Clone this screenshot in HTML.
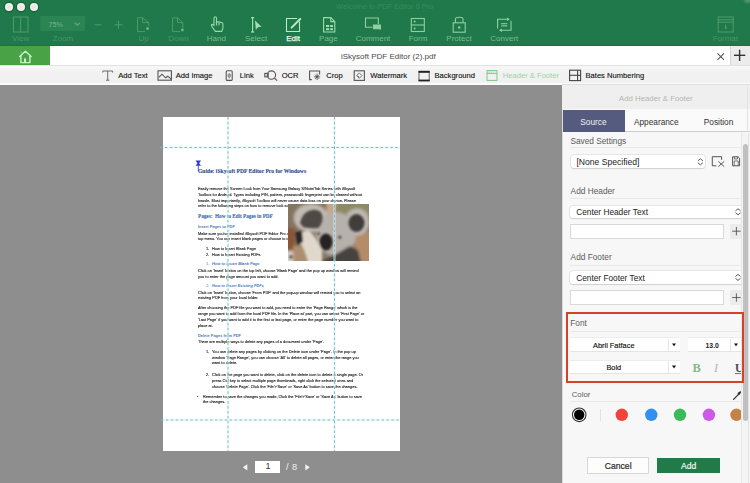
<!DOCTYPE html>
<html><head><meta charset="utf-8">
<style>
*{margin:0;padding:0;box-sizing:border-box}
html,body{width:750px;height:483px;overflow:hidden;background:#8e8e8e;font-family:"Liberation Sans",sans-serif}
.a{position:absolute}
.t{position:absolute;white-space:nowrap;line-height:1}
#top{left:0;top:0;width:750px;height:45px;background:#20794a}
#top .lbl{font-size:8px;color:#78b991;text-align:center;width:60px;top:35.2px}
.tl{width:8px;height:8px;border-radius:50%;background:radial-gradient(#e8dede 0,#eef4ee 60%);top:2.8px;box-shadow:0 0 0 1.4px #1b6439}
#tabs{left:0;top:45px;width:750px;height:21px;background:#fff;border-top:1px solid #1e6f41}
#home{left:0;top:46px;width:50px;height:19.3px;background:#4aa247}
#plus{left:730px;top:46px;width:20px;height:19px;background:#ececec;border-left:1px solid #d6d6d6}
#tb{left:0;top:65.3px;width:750px;height:19.7px;background:linear-gradient(#f8f8f8,#f1f1f1 40%,#f1f1f1);border-top:1px solid #e2e2e2;border-bottom:2px solid #fbfbfb}
#tbt .t{font-size:7.6px;color:#111;-webkit-text-stroke:0.12px #111}
#doc{left:0;top:85px;width:562px;height:398px;background:#8e8e8e}
#page{left:163px;top:117px;width:237px;height:334px;background:#fff}
#panel{left:562px;top:85px;width:188px;height:398px;background:#f7f7f7;border-left:1px solid #dcdcdc}
.lb{font-size:8.3px;color:#5a5a5a}
.sep{left:570px;width:170px;height:1px;background:#e8e8e8}
.dd{background:#fff;border-radius:3px;box-shadow:0 0 0 0.6px #d8d8d8,0 0.6px 1px rgba(0,0,0,.18)}
.inp{background:#fff;border:1px solid #d9d9d9}
.dd2{background:#fff;border-top:1px solid #ececec;border-bottom:1px solid #e4e4e4}
.bt{font-size:4.2px;color:#1a1a1a;transform:scaleX(0.93);transform-origin:0 0;-webkit-text-stroke:0.12px #1a1a1a}
</style></head><body>
<div id="top" class="a">
<div class="t" style="left:336px;top:2.6px;font-size:7.45px;color:#2f9058">Welcome to PDF Editor 6 Pro</div>
<svg class="a" style="left:0;top:0" width="750" height="45" viewBox="0 0 750 45">
<g fill="none" stroke="#4f9c6c" stroke-width="1">
<rect x="13.5" y="17" width="14.5" height="15"/><line x1="20.7" y1="17" x2="20.7" y2="32"/>
</g>
<rect x="40.2" y="15.9" width="45" height="15.2" fill="#2b8453"/>
<text x="48.5" y="27" font-family="Liberation Sans" font-size="7.2" font-weight="bold" fill="#5ea97e">75%</text>
<path d="M74.6 22.8 L77.3 25.3 L80 22.8" fill="none" stroke="#5ea97e" stroke-width="1.2"/>
<g stroke="#4f9c6c" stroke-width="1" fill="none">
<line x1="94.5" y1="24.8" x2="101.5" y2="24.8"/>
<line x1="114.5" y1="24.8" x2="122.5" y2="24.8"/><line x1="118.5" y1="20.8" x2="118.5" y2="28.8"/>
<path d="M145 31.6 H137.6 V17.8 H142.5 L148.8 22.6 V26.5"/><path d="M142.5 17.8 V22.6 H148.8"/>
<path d="M180 31.6 H172.6 V17.8 H177.5 L182.8 22.6 V28"/><path d="M177.5 17.8 V22.6 H182.8"/>
</g>
<circle cx="147.5" cy="28.6" r="1.4" fill="#6cba88"/>
<circle cx="182.4" cy="30" r="1.4" fill="#6cba88"/>
<g stroke="#95d9a8" stroke-width="1.1" fill="none" stroke-linejoin="round" stroke-linecap="round">
<path d="M215.3 31.4 L211.6 26.2 Q210.8 24.6 212.3 24.3 L214 25.6 V18 Q214.1 16.8 215.2 16.8 Q216.4 16.8 216.5 18 V22.2 Q217.8 21.4 219 22.1 Q220.4 21.6 221.3 22.6 Q222.8 22.3 222.9 24 V28.4 L221.8 31.4 Z"/>
<line x1="216.5" y1="22.2" x2="216.5" y2="25"/><line x1="219" y1="22.1" x2="219" y2="25"/>
</g>
<g stroke="#9fe0b0" stroke-width="1.2" fill="none">
<line x1="252.6" y1="17.6" x2="252.6" y2="32"/><line x1="251" y1="17.6" x2="254.2" y2="17.6"/><line x1="251" y1="32" x2="254.2" y2="32"/>
</g>
<path d="M255 20.6 L261.6 26.8 L258.4 27 L255.8 29.8 Z" fill="#9fe0b0"/>
<g stroke="#b8eac5" stroke-width="1.1" fill="none">
<path d="M297.2 18.5 H286.5 V31.5 H299.5 V21.5"/>
</g>
<path d="M291.6 27.6 L300.2 19" stroke="#b8eac5" stroke-width="2" stroke-linecap="round"/>
<g stroke="#9fdcb0" stroke-width="1.1" fill="none" stroke-linejoin="round">
<path d="M330.8 17.6 H323.6 V32 H334.8 V21.6 Z M330.8 17.6 L334.8 21.6"/>
<path d="M330.8 17.6 V21.6 H334.8"/>
</g>
<g fill="#9fdcb0"><rect x="326" y="25" width="3.2" height="2"/><rect x="330.2" y="25" width="2.8" height="2"/><rect x="326" y="28.2" width="3.2" height="2"/><rect x="330.2" y="28.2" width="2.8" height="2"/></g>
<g stroke="#8fd0a2" stroke-width="1.1" fill="none">
<path d="M372.5 27.3 H365.5 V18 H378.3 V24"/>
<rect x="411.3" y="18.5" width="13" height="13"/><line x1="411.3" y1="25" x2="424.3" y2="25"/>
<path d="M455.4 22.8 V19.2 Q455.4 17.3 459.2 17.3 Q463 17.3 463 19.2 V22.8"/>
<rect x="453.2" y="22.8" width="12" height="9.4"/>
</g>
<path d="M373 24.4 H381 V30 L379.8 29.2 H373 Z" fill="#8fd0a2"/>
<circle cx="414.6" cy="21.6" r="1" fill="#8fd0a2"/><circle cx="414.6" cy="28.4" r="1" fill="#8fd0a2"/>
<circle cx="459.2" cy="27.5" r="1.2" fill="#8fd0a2"/>
<g stroke="#8fd0a2" stroke-width="1.1" fill="none">
<path d="M507.5 19.2 H497.6 V28.4"/><path d="M500.8 30.2 H511 V20.8"/>
<line x1="501.2" y1="23.7" x2="507.3" y2="23.7"/><line x1="501.2" y1="25.9" x2="507.3" y2="25.9"/>
</g>
<path d="M507 17.5 L509.8 19.2 L507 21 Z M502 28.5 L499 30.3 L502 32 Z" fill="#8fd0a2"/>
<g stroke="#4f9c6c" stroke-width="1" fill="none">
<rect x="718.2" y="17" width="15" height="15"/><line x1="718.2" y1="19.8" x2="733.2" y2="19.8"/><line x1="718.2" y1="22.2" x2="733.2" y2="22.2"/>
<line x1="725.7" y1="24.5" x2="725.7" y2="29"/>
</g>
<path d="M724.3 27.5 L725.7 29.6 L727.1 27.5 Z" fill="#4f9c6c"/>
</svg>
  <div class="a tl" style="left:4.7px"></div>
  <div class="a tl" style="left:17px"></div>
  <div class="a tl" style="left:29.6px"></div>
  <div class="t lbl" style="left:-9.3px;color:#4c9468">View</div>
  <div class="t lbl" style="left:33px;color:#4c9468">Zoom</div>
  <div class="t lbl" style="left:113.5px;color:#4c9468">Up</div>
  <div class="t lbl" style="left:148.4px;color:#4c9468">Down</div>
  <div class="t lbl" style="left:186.3px">Hand</div>
  <div class="t lbl" style="left:226px">Select</div>
  <div class="t lbl" style="left:263.2px;color:#eef8f0;-webkit-text-stroke:0.25px #eef8f0">Edit</div>
  <div class="t lbl" style="left:298.4px">Page</div>
  <div class="t lbl" style="left:343px">Comment</div>
  <div class="t lbl" style="left:388px">Form</div>
  <div class="t lbl" style="left:429px">Protect</div>
  <div class="t lbl" style="left:474.3px">Convert</div>
  <div class="t lbl" style="left:695.3px;color:#4c9468">Format</div>
</div>
<div id="tabs" class="a"></div>
<div id="home" class="a"></div><div id="plus" class="a"></div>
<svg class="a" style="left:0;top:44px" width="750" height="24" viewBox="0 44 750 24">
<g fill="none" stroke="#c6f2c6" stroke-width="1.4" stroke-linejoin="round" stroke-linecap="round">
<path d="M19.6 56.6 L25.4 51.2 L31.2 56.6"/><path d="M20.9 55.6 V62.6 H29.9 V55.6"/>
</g>
<rect x="24" y="58.4" width="2" height="4" fill="#c6f2c6"/>
<circle cx="21.2" cy="52.2" r="0.6" fill="#9ad89a"/>
<g stroke="#555" stroke-width="1.1"><line x1="717.5" y1="53.3" x2="724" y2="59.8"/><line x1="724" y1="53.3" x2="717.5" y2="59.8"/></g>
<g stroke="#333" stroke-width="1.4"><line x1="734" y1="55.3" x2="745.3" y2="55.3"/><line x1="739.6" y1="49.7" x2="739.6" y2="61"/></g>
</svg>
<div class="t" style="left:341px;top:52.6px;font-size:8px;color:#4a4a4a">iSkysoft PDF Editor (2).pdf</div>
<div id="tb" class="a"></div>
<svg class="a" style="left:0;top:65px" width="750" height="20" viewBox="0 65 750 20">
<g fill="none" stroke="#6a6a6a" stroke-width="1">
<path d="M102.8 72.6 V71 H112.6 V72.6 M107.7 71 V80 M106 80.2 H109.4"/>
</g>
<g fill="none" stroke="#555" stroke-width="1.1">
<rect x="158" y="70.8" width="13.4" height="9.4"/>
<path d="M158.8 77.4 L162 74.2 L165.6 77.8 L167.8 76.2 L171.4 79.4"/>
<rect x="226.2" y="70.8" width="6" height="9.6" rx="1"/>
<path d="M229.2 73 V78.4 M228.2 74 V77.2 M230.2 74 V77.2" stroke-width="0.7"/>
<rect x="264.8" y="73.4" width="3.4" height="3.4"/>
<circle cx="271.4" cy="75.1" r="4.2"/><line x1="274.4" y1="78.1" x2="277.2" y2="80.6"/>
<path d="M319.6 74.2 V71 H309.6 V79.6 H311.8"/>
<rect x="354.2" y="70.8" width="10.2" height="9.6"/>
<path d="M356.6 75.6 L359.3 72.9 L362 75.6 L359.3 78.3 Z M357.6 75.6 L359.3 77.3" stroke-width="0.8"/>
<rect x="419" y="71.6" width="10.2" height="9" stroke-width="0.9"/>
</g>
<path d="M314 76.8 H320.2 M317.1 73.6 V80 M315 74.6 L319.2 78.9 M319.2 74.6 L315 78.9" stroke="#444" stroke-width="0.8"/>
<rect x="418.5" y="70.8" width="11.2" height="2" fill="#222"/><rect x="418.5" y="79.6" width="11.2" height="1.8" fill="#222"/>
<g fill="none" stroke="#7cc785" stroke-width="1"><rect x="487" y="70.6" width="10" height="9.8"/><line x1="487" y1="73.4" x2="497" y2="73.4"/></g>
<path d="M489 71.6 v1 M491.5 71.6 v1 M494 71.6 v1" stroke="#7cc785" stroke-width="0.8"/>
<g fill="none" stroke="#444" stroke-width="1.1"><rect x="569.6" y="70.2" width="11" height="10.4"/><line x1="569.6" y1="75.3" x2="580.6" y2="75.3"/><line x1="577.6" y1="70.2" x2="577.6" y2="80.6"/></g>
</svg>
<div id="tbt" class="a" style="left:0;top:65px;width:750px;height:20px">
  <div class="t" style="left:118.3px;top:6.8px">Add Text</div>
  <div class="t" style="left:175.8px;top:6.8px">Add Image</div>
  <div class="t" style="left:239.8px;top:6.8px">Link</div>
  <div class="t" style="left:281.7px;top:6.8px">OCR</div>
  <div class="t" style="left:326.2px;top:6.8px">Crop</div>
  <div class="t" style="left:370.3px;top:6.8px">Watermark</div>
  <div class="t" style="left:434.5px;top:6.8px">Background</div>
  <div class="t" style="left:502.8px;top:6.8px;color:#9ad4a2;-webkit-text-stroke:0 transparent">Header &amp; Footer</div>
  <div class="t" style="left:585.5px;top:6.8px">Bates Numbering</div>
</div>
<div id="doc" class="a"></div>
<div id="page" class="a"></div>
<div id="pg" class="a" style="left:0;top:0;width:750px;height:483px">
<div class="t bt" style="left:198px;top:186.51px">Easily remove the Screen Lock from Your Samsung Galaxy S/Note/Tab Series with iSkysoft</div>
<div class="t bt" style="left:198px;top:192.81px">Toolbox for Android. Types including PIN, pattern, password&amp; fingerprint can be cleared without</div>
<div class="t bt" style="left:198px;top:198.61px">hassle. Most importantly, iSkysoft Toolbox will never cause data loss on your device. Please</div>
<div class="t bt" style="left:198px;top:204.21px">refer to the following steps on how to remove lock screen.</div>
<div class="t bt" style="left:198px;top:231.61px">Make sure you've installed iSkysoft PDF Editor Pro on your computer. Go to 'Page' tab on the</div>
<div class="t bt" style="left:198px;top:237.41px">top menu. You can insert blank pages or choose to insert existing PDFs.</div>
<div class="t bt" style="left:212.4px;top:247.01px">How to Insert Blank Page</div>
<div class="t bt" style="left:212.4px;top:253.11px">How to Insert Existing PDFs</div>
<div class="t bt" style="left:198px;top:268.91px">Click on 'Insert' button on the top left, choose 'Blank Page' and the pop up window will remind</div>
<div class="t bt" style="left:198px;top:275.11px">you to enter the page amount you want to add.</div>
<div class="t bt" style="left:198px;top:290.61px">Click on 'Insert' button, choose 'From PDF' and the pop-up window will remind you to select an</div>
<div class="t bt" style="left:198px;top:296.21px">existing PDF from your local folder.</div>
<div class="t bt" style="left:198px;top:306.11px">After choosing the PDF file you want to add, you need to enter the 'Page Range' which is the</div>
<div class="t bt" style="left:198px;top:312.11px">range you want to add from the local PDF file. In the 'Place at' part, you can select 'First Page' or</div>
<div class="t bt" style="left:198px;top:317.91px">'Last Page' if you want to add it to the first or last page, or enter the page number you want to</div>
<div class="t bt" style="left:198px;top:324.01px">place at.</div>
<div class="t bt" style="left:198px;top:339.51px">There are multiple ways to delete any pages of a document under 'Page'.</div>
<div class="t bt" style="left:212px;top:349.71px">You can delete any pages by clicking on the Delete icon under 'Page'. In the pop up</div>
<div class="t bt" style="left:212px;top:355.91px">window 'Page Range', you can choose 'All' to delete all pages, or enter the range you</div>
<div class="t bt" style="left:212px;top:361.21px">want to delete.</div>
<div class="t bt" style="left:212px;top:373.11px">Click on the page you want to delete, click on the delete icon to delete a single page. Or</div>
<div class="t bt" style="left:212px;top:379.31px">press Ctrl key to select multiple page thumbnails, right click the selected ones and</div>
<div class="t bt" style="left:212px;top:385.31px">choose 'Delete Page'. Click the 'File'&gt;'Save' or 'Save As' button to save the changes.</div>
<div class="t bt" style="left:203.2px;top:395.11px">Remember to save the changes you made, Click the 'File'&gt;'Save' or 'Save As' button to save</div>
<div class="t bt" style="left:203.2px;top:400.41px">the changes.</div>
<div class="t bt" style="left:205.7px;top:247.01px">1.</div>
<div class="t bt" style="left:205.7px;top:253.11px">2.</div>
<div class="t bt" style="left:205.9px;top:349.71px">1.</div>
<div class="t bt" style="left:205.9px;top:373.11px">2.</div>
<div class="t bt" style="left:196.6px;top:395.11px">&#8226;</div>
<div class="t" style="left:198px;top:169.28px;font-family:'Liberation Serif';font-weight:bold;font-size:5.6px;color:#2d4d85;-webkit-text-stroke:0.1px #2d4d85">Guide: iSkysoft PDF Editor Pro for Windows</div>
<div class="t" style="left:198px;top:213.87px;font-family:'Liberation Serif';font-weight:bold;font-size:5.2px;color:#3f6eb4;-webkit-text-stroke:0.1px #3f6eb4">Pages:&nbsp; How to Edit Pages in PDF</div>
<div class="t" style="left:198px;top:225.3px;font-size:3.9px;font-weight:bold;color:#4a78bc">Insert Pages to PDF</div>
<div class="t" style="left:198px;top:333.6px;font-size:3.92px;font-weight:bold;color:#4a78bc">Delete Pages from PDF</div>
<div class="t" style="left:212px;top:262.2px;font-size:3.96px;font-weight:bold;font-style:italic;color:#4a78bc">How to Insert Blank Page</div>
<div class="t" style="left:212px;top:284.2px;font-size:3.9px;font-weight:bold;font-style:italic;color:#4a78bc">How to Insert Existing PDFs</div>
<div class="t" style="left:205.9px;top:262.10px;font-size:4.2px;color:#4f81bd">1.</div>
<div class="t" style="left:205.9px;top:284.10px;font-size:4.2px;color:#4f81bd">2.</div>
</div>
<svg class="a" style="left:288.3px;top:203.9px" width="81" height="57.4" viewBox="0 0 81 57.4">
<defs><filter id="bl" x="-30%" y="-30%" width="160%" height="160%"><feGaussianBlur stdDeviation="1.5"/></filter>
<filter id="bl2" x="-30%" y="-30%" width="160%" height="160%"><feGaussianBlur stdDeviation="0.8"/></filter>
<clipPath id="kc"><rect width="81" height="57.4"/></clipPath></defs>
<g clip-path="url(#kc)">
<rect width="81" height="57.4" fill="#8c7c66"/>
<g filter="url(#bl)">
<rect x="-4" y="-4" width="44" height="30" fill="#857560"/>
<rect x="46" y="-4" width="40" height="14" fill="#8c8a66"/>
<path d="M39 -4 L49 -4 L46 10 L38 10 Z" fill="#c6a890"/>
<rect x="-4" y="24" width="11" height="26" fill="#8a5436"/>
<rect x="-4" y="47" width="10" height="14" fill="#d8cfc6"/>
<rect x="5" y="42" width="14" height="18" fill="#ad8e70"/>
<path d="M66 28 L86 28 L86 62 L68 62 Z" fill="#b58c68"/>
<ellipse cx="23" cy="14" rx="17" ry="14" fill="#c2bbb5"/>
<ellipse cx="69" cy="18" rx="12.5" ry="13.5" fill="#bfb8b2"/>
<ellipse cx="48" cy="30" rx="20" ry="22" fill="#b7b1ac"/>
<path d="M32 58 L48 50 L62 42 L70 46 L74 62 L30 62 Z" fill="#45423f"/>
</g>
<g filter="url(#bl2)">
<path d="M12 19 Q15 7 24 6 Q33 5 34.5 12 Q35 20 30 24 Q22 25 15 23 Z" fill="#4f4945"/>
<ellipse cx="68.5" cy="19" rx="8" ry="9" fill="#403c3a"/>
<path d="M12 29 L20 26 Q26 30 34 46 L34 60 L20 60 Q18 48 12 38 Z" fill="#e0d8cc"/>
<path d="M7 28 L14 27 L15 38 L9 41 Z" fill="#2c2826"/>
<ellipse cx="38" cy="38" rx="6.6" ry="8.6" fill="#262422"/>
<circle cx="30.5" cy="29.7" r="1.2" fill="#222"/>
<circle cx="51.9" cy="33.2" r="1.3" fill="#222"/>
<circle cx="3" cy="52.8" r="1.6" fill="#3a3430"/>
</g>
</g>
</svg>
<svg class="a" style="left:0;top:0" width="562" height="483" viewBox="0 0 562 483">
<g stroke="#d8f4f6" stroke-width="2.6" opacity="0.5">
<line x1="228" y1="117" x2="228" y2="451"/><line x1="334.5" y1="117" x2="334.5" y2="451"/>
<line x1="163" y1="147.5" x2="400" y2="147.5"/><line x1="163" y1="420" x2="400" y2="420"/>
</g>
<g stroke="#86b9bf" stroke-width="1" stroke-dasharray="2.5 2.4">
<line x1="228" y1="117" x2="228" y2="451"/><line x1="334.5" y1="117" x2="334.5" y2="451"/>
<line x1="160" y1="147.5" x2="400" y2="147.5"/><line x1="161" y1="420" x2="400" y2="420"/>
</g>
<g fill="#2a3ccc">
<path d="M195.6 160.6 H201 L199.2 163.2 L201 165.8 H195.6 L197.4 163.2 Z"/>
</g>
<path d="M198.3 165.8 V171" stroke="#2a3ccc" stroke-width="0.9"/>
</svg>
<div class="a" style="left:255.3px;top:460.7px;width:24.3px;height:12px;background:#fff"></div>
<div class="t" style="left:265.4px;top:462.2px;font-size:9px;color:#333">1</div>
<div class="t" style="left:286px;top:462.8px;font-size:9.2px;color:#f2f2f2;word-spacing:1px">/ 8</div>
<svg class="a" style="left:240px;top:462px" width="72" height="10" viewBox="240 462 72 10">
<path d="M247.3 464.2 L242.8 467.3 L247.3 470.4 Z" fill="#f4f4f4"/>
<path d="M305.3 464.2 L309.8 467.3 L305.3 470.4 Z" fill="#f4f4f4"/>
</svg>
<div id="panel" class="a"></div>
<div class="a" style="left:562px;top:84px;width:188px;height:25px;background:#efefef;border-top:1px solid #dedede"></div>
<div class="t" style="left:619px;top:94.6px;font-size:7.8px;color:#b4b4b4">Add Header &amp; Footer</div>
<div class="a" style="left:563px;top:109px;width:187px;height:23px;background:#fafafa;border-bottom:1px solid #cdcdcd"></div>
<div class="a" style="left:563px;top:109.8px;width:62px;height:21.9px;background:#555b7f"></div>
<div class="t" style="left:580.3px;top:117.8px;font-size:8.3px;color:#f0f0f6">Source</div>
<div class="t" style="left:633.9px;top:117.8px;font-size:8.3px;color:#333">Appearance</div>
<div class="t" style="left:703.8px;top:117.8px;font-size:8.3px;color:#333">Position</div>
<div id="pc" class="a" style="left:0;top:0;width:741px;height:483px;overflow:hidden">
<div class="a" style="left:563px;top:133px;width:187px;height:350px;background:#f7f7f7"></div>
<div class="t lb" style="left:570.4px;top:136.6px">Saved Settings</div>
<div class="a sep" style="top:146.6px"></div>
<div class="a dd" style="left:571px;top:155.2px;width:134px;height:13px"></div>
<div class="t" style="left:576.4px;top:158px;font-size:8.6px;color:#222">[None Specified]</div>
<div class="t lb" style="left:570.6px;top:187.2px">Add Header</div>
<div class="a sep" style="top:198.2px"></div>
<div class="a dd" style="left:570.2px;top:205.8px;width:175px;height:12.6px"></div>
<div class="t" style="left:576.2px;top:208.2px;font-size:8.3px;color:#222">Center Header Text</div>
<div class="a inp" style="left:570.2px;top:223.8px;width:153.4px;height:15px"></div>
<div class="a" style="left:730px;top:223.8px;width:11px;height:15px;background:#ececec"></div>
<div class="t lb" style="left:570.6px;top:253.4px">Add Footer</div>
<div class="a sep" style="top:264.6px"></div>
<div class="a dd" style="left:570.2px;top:271.4px;width:175px;height:12.6px"></div>
<div class="t" style="left:576.2px;top:273.8px;font-size:8.3px;color:#222">Center Footer Text</div>
<div class="a inp" style="left:570.2px;top:290.2px;width:153.4px;height:14.6px"></div>
<div class="a" style="left:730px;top:290.2px;width:11px;height:14.6px;background:#ececec"></div>
<div class="t lb" style="left:570.3px;top:319.2px">Font</div>
<div class="a sep" style="top:330.6px"></div>
<div class="a dd2" style="left:570px;top:337.3px;width:110px;height:15px"></div>
<div class="a" style="left:668.2px;top:339px;width:1px;height:11.5px;background:#e6e6e6"></div>
<div class="t" style="left:593px;top:342.1px;font-size:7.4px;color:#111;-webkit-text-stroke:0.15px #111">Abril Fatface</div>
<div class="a dd2" style="left:688px;top:337.3px;width:58px;height:15px"></div>
<div class="a" style="left:730.3px;top:339px;width:1px;height:11.5px;background:#e6e6e6"></div>
<div class="t" style="left:705.5px;top:342.6px;font-size:6.9px;color:#222;font-weight:bold">13.0</div>
<div class="a dd2" style="left:570px;top:359.6px;width:110px;height:14.4px"></div>
<div class="a" style="left:668.2px;top:361px;width:1px;height:11.5px;background:#e6e6e6"></div>
<div class="t" style="left:606.4px;top:363.7px;font-size:7.4px;color:#111;-webkit-text-stroke:0.15px #111">Bold</div>
<div class="t lb" style="left:571.7px;top:391.4px;font-size:7.8px">Color</div>
<div class="a sep" style="top:401.3px"></div>
<div class="a" style="left:587px;top:457.2px;width:62px;height:16.6px;background:#fdfdfd;border:1px solid #d8d8d8"></div>
<div class="t" style="left:604.8px;top:462.4px;font-size:8.6px;color:#2a2a2a;-webkit-text-stroke:0.2px #2a2a2a">Cancel</div>
<div class="a" style="left:657.3px;top:457.5px;width:62.8px;height:15.8px;background:#227a48"></div>
<div class="t" style="left:681px;top:462.4px;font-size:8.6px;color:#eef8f1;-webkit-text-stroke:0.2px #eef8f1">Add</div>
<svg class="a" style="left:560px;top:130px" width="190" height="353" viewBox="560 130 190 353">
<g fill="none" stroke="#444" stroke-width="0.9" stroke-linecap="round" stroke-linejoin="round">
<path d="M698.2 160.6 L700.4 158.8 L702.6 160.6 M698.2 163 L700.4 164.8 L702.6 163"/>
<path d="M735.8 210.6 L738 208.8 L740.2 210.6 M735.8 213 L738 214.8 L740.2 213"/>
<path d="M735.8 276.2 L738 274.4 L740.2 276.2 M735.8 278.6 L738 280.4 L740.2 278.6"/>
</g>
<g fill="none" stroke="#555" stroke-width="1">
<path d="M716.4 165.8 H712.3 V156.7 H721.6 V159.8"/>
<path d="M718.4 161.4 L724.2 166.6 M724.2 161.4 L718.4 166.6"/>
<path d="M732.6 156.8 H738.2 L739.6 158.2 V165.8 H732.6 Z"/>
<path d="M734.2 165.8 V161 H738.2 V165.8 M734.4 156.8 V159 H737.4 V156.8" stroke-width="0.8"/>
</g>
<g stroke="#555" stroke-width="0.9">
<line x1="732.2" y1="231.2" x2="740.6" y2="231.2"/><line x1="736.4" y1="227" x2="736.4" y2="235.4"/>
<line x1="732.2" y1="297.5" x2="740.6" y2="297.5"/><line x1="736.4" y1="293.3" x2="736.4" y2="301.7"/>
</g>
<g fill="#111">
<path d="M672 343.4 H676 L674 346.2 Z"/>
<path d="M734 343.4 H738 L736 346.2 Z"/>
<path d="M672 365.6 H676 L674 368.4 Z"/>
</g>
<text x="692.4" y="372" font-family="Liberation Serif" font-weight="bold" font-size="12.4" fill="#86b988">B</text>
<text x="714" y="372" font-family="Liberation Serif" font-style="italic" font-size="12" fill="#b4b4b4">I</text>
<text x="735" y="372" font-family="Liberation Serif" font-weight="bold" font-size="11.5" fill="#4a4a4a">U</text><line x1="735" y1="373.6" x2="742" y2="373.6" stroke="#4a4a4a" stroke-width="0.8"/>
<circle cx="579.2" cy="414.8" r="6.8" fill="none" stroke="#333" stroke-width="1.1"/>
<circle cx="579.2" cy="414.8" r="5.2" fill="#000"/>
<line x1="600.5" y1="409" x2="600.5" y2="421.6" stroke="#e2e2e2" stroke-width="1"/>
<circle cx="621.8" cy="414.8" r="6.2" fill="#f04438"/>
<circle cx="651.3" cy="414.8" r="6.2" fill="#3390f0"/>
<circle cx="680" cy="414.8" r="6.2" fill="#3cba5a"/>
<circle cx="708.9" cy="414.8" r="6.2" fill="#cc5ae6"/>
<circle cx="736.5" cy="414.8" r="6.2" fill="#c48244"/>
<path d="M733.6 399.4 L738.2 394.6" stroke="#333" stroke-width="1.3" stroke-linecap="round"/><path d="M737.4 393.2 L739.6 391.4 Q740.8 390.8 741.2 392 L740.8 393 L739 395.4 Z" fill="#333"/>
</svg>
</div>
<div class="a" style="left:741px;top:133px;width:1px;height:350px;background:#e6e6e6"></div>
<div class="a" style="left:742px;top:133px;width:8px;height:350px;background:#f4f4f4"></div>
<div class="a" style="left:742.8px;top:144px;width:5px;height:277px;border-radius:2.5px;background:#c0c0c0"></div>
<div class="a" style="left:748px;top:133px;width:1px;height:350px;background:#e4e4e4"></div>
<div class="a" style="left:566.3px;top:312px;width:177.9px;height:70.8px;border:2.8px solid #d5412b"></div>
<div class="a" style="left:744px;top:-3px;width:8px;height:6px;border-radius:50%;background:#4f9574;filter:blur(1px)"></div>
<div class="a" style="left:747px;top:86px;width:1px;height:46px;background:#e2e2e2"></div>
</body></html>
